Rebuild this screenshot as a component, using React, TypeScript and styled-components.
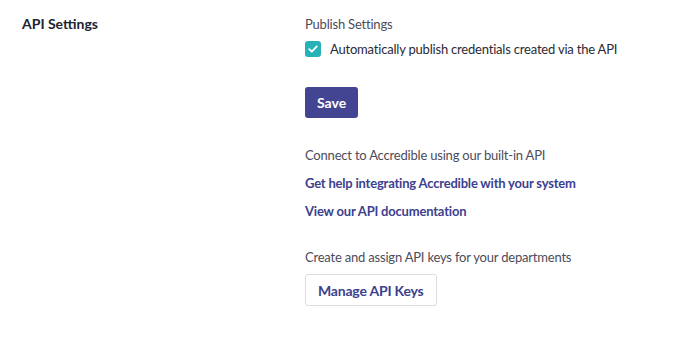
import * as React from "react";
import styled, { createGlobalStyle } from "styled-components";

const GlobalStyle = createGlobalStyle`
  body {
    margin: 0;
    background: #ffffff;
    font-family: "Lato", "Open Sans", sans-serif;
    -webkit-font-smoothing: antialiased;
  }
`;

export default function App() {
  return (
    <>
      <GlobalStyle />
      <Page>
        <SectionTitle>API Settings</SectionTitle>
        <Content>
          <Label>Publish Settings</Label>
          <CheckRow>
            <CheckBox>
              <svg width="12" height="12" viewBox="0 0 12 12" fill="none">
                <path
                  d="M2.2 6.2 L4.8 8.6 L9.8 3.4"
                  stroke="#ffffff"
                  strokeWidth="1.8"
                  strokeLinecap="round"
                  strokeLinejoin="round"
                />
              </svg>
            </CheckBox>
            <CheckText>Automatically publish credentials created via the API</CheckText>
          </CheckRow>
          <PrimaryButton>Save</PrimaryButton>
          <Group $gap={12} $top={29}>
            <Label>Connect to Accredible using our built-in API</Label>
            <Link href="#">Get help integrating Accredible with your system</Link>
            <Link href="#">View our API documentation</Link>
          </Group>
          <Group $gap={9} $top={30}>
            <Label>Create and assign API keys for your departments</Label>
            <SecondaryButton>Manage API Keys</SecondaryButton>
          </Group>
        </Content>
      </Page>
    </>
  );
}

const Page = styled.div`
  display: grid;
  grid-template-columns: 283px 1fr;
  padding: 15px 0 0 22px;
  width: 688px;
  height: 346px;
  box-sizing: border-box;
`;

const SectionTitle = styled.h2`
  margin: 0;
  font-size: 14px;
  font-weight: 700;
  color: #222230;
  line-height: 18px;
`;

const Content = styled.div`
  display: flex;
  flex-direction: column;
  align-items: flex-start;
  padding-top: 1px;
`;

const Label = styled.div`
  font-size: 13px;
  letter-spacing: -0.2px;
  color: #4c4c5a;
  line-height: 16px;
`;

const CheckRow = styled.div`
  display: flex;
  align-items: center;
  gap: 9px;
  margin-top: 9px;
  margin-bottom: 1px;
`;

const CheckBox = styled.span`
  width: 16px;
  height: 16px;
  border-radius: 3px;
  background: #27b2b8;
  display: flex;
  align-items: center;
  justify-content: center;
`;

const CheckText = styled.span`
  font-size: 13px;
  letter-spacing: -0.2px;
  color: #2a2a36;
`;

const PrimaryButton = styled.button`
  margin-top: 29px;
  height: 31px;
  padding: 0 12px;
  border: none;
  border-radius: 3px;
  background: #434593;
  color: #ffffff;
  font-family: inherit;
  font-size: 14px;
  font-weight: 700;
`;

const Group = styled.div<{ $gap: number; $top: number }>`
  display: flex;
  flex-direction: column;
  align-items: flex-start;
  gap: ${(p) => p.$gap}px;
  margin-top: ${(p) => p.$top}px;
`;

const Link = styled.a`
  font-size: 13px;
  font-weight: 700;
  letter-spacing: -0.2px;
  color: #3d3f8f;
  text-decoration: none;
  line-height: 16px;
`;

const SecondaryButton = styled.button`
  height: 32px;
  padding: 0 12px;
  border: 1px solid #dcdce2;
  border-radius: 3px;
  background: #ffffff;
  color: #3d3f8f;
  font-family: inherit;
  font-size: 14px;
  font-weight: 700;
  letter-spacing: -0.2px;
`;
